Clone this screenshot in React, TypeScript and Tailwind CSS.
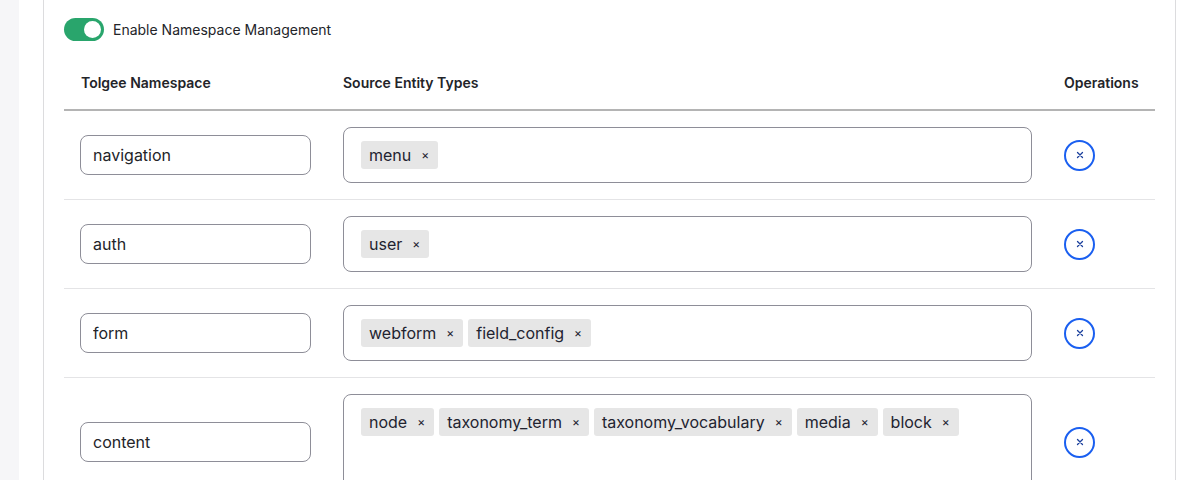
import { useState } from 'react';

type Row = { name: string; types: string[]; tall?: boolean };

const initialRows: Row[] = [
  { name: 'navigation', types: ['menu'] },
  { name: 'auth', types: ['user'] },
  { name: 'form', types: ['webform', 'field_config'] },
  { name: 'content', types: ['node', 'taxonomy_term', 'taxonomy_vocabulary', 'media', 'block'], tall: true },
];

const Tag = ({ label }: { label: string }) => (
  <span className="inline-flex items-center h-[28px] pl-[8px] pr-[9px] rounded-[3px] bg-[#e6e6e6] text-[16px] text-[#222330]">
    {label}
    <span className="ml-[10px] text-[12px] leading-none text-[#222330]">×</span>
  </span>
);

export default function App() {
  const [enabled, setEnabled] = useState(true);
  const [rows] = useState(initialRows);

  return (
    <div
      className="w-[1195px] h-[480px] overflow-hidden bg-[#f6f6f8] pl-[19px]"
      style={{ fontFamily: 'Inter, "Noto Sans", sans-serif' }}
    >
      <div className="h-full bg-white pl-[24px] pr-[19px]">
        <div className="h-full border-x border-[#dcdcde] px-[20px] pt-[18px]">
          {/* Toggle */}
          <div className="flex items-center gap-[9px]">
            <button
              onClick={() => setEnabled(!enabled)}
              className="relative w-[40px] h-[23px] rounded-full bg-[#29a56c]"
            >
              <span className="absolute right-[3px] top-[3px] w-[17px] h-[17px] rounded-full bg-white" />
            </button>
            <span className="text-[14px] text-[#232429]">Enable Namespace Management</span>
          </div>

          {/* Table */}
          <table className="w-full mt-[14px] border-collapse">
            <thead>
              <tr className="border-b-2 border-[#b4b4b4]">
                <th className="w-[263px] pl-[17px] pt-[17px] pb-[16px] text-left text-[14px] font-semibold text-[#232429]">
                  Tolgee Namespace
                </th>
                <th className="pl-[16px] pt-[17px] pb-[16px] text-left text-[14px] font-semibold text-[#232429]">
                  Source Entity Types
                </th>
                <th className="w-[107px] pl-[16px] pt-[17px] pb-[16px] text-left text-[14px] font-semibold text-[#232429]">
                  Operations
                </th>
              </tr>
            </thead>
            <tbody>
              {rows.map((r) => (
                <tr key={r.name} className="border-b border-[#e4e4e6]">
                  <td className="pl-[16px] pr-[16px] py-[16px] align-middle">
                    <input
                      defaultValue={r.name}
                      className="w-[231px] h-[40px] px-[12px] rounded-[8px] border border-[#8e8e98] text-[16px] text-[#232429] outline-none"
                    />
                  </td>
                  <td className="pl-[16px] pr-[16px] py-[16px] align-middle">
                    <div
                      className={`w-[689px] rounded-[8px] border border-[#8e8e98] pl-[17px] pr-[12px] pt-[13px] ${
                        r.tall ? 'h-[96px]' : 'h-[56px]'
                      }`}
                    >
                      <div className="flex flex-wrap gap-[5px]">
                        {r.types.map((t) => (
                          <Tag key={t} label={t} />
                        ))}
                      </div>
                    </div>
                  </td>
                  <td className="pl-[16px] py-[16px] align-middle">
                    <button className="flex items-center justify-center w-[31px] h-[31px] rounded-full border-2 border-[#1a5ff0] text-[#1a4fb0]">
                      <svg width="8" height="8" viewBox="0 0 8 8">
                        <path d="M1.5 1.5 L6.5 6.5 M6.5 1.5 L1.5 6.5" stroke="#1a3f9c" strokeWidth="1.3" strokeLinecap="round" />
                      </svg>
                    </button>
                  </td>
                </tr>
              ))}
            </tbody>
          </table>
        </div>
      </div>
    </div>
  );
}
